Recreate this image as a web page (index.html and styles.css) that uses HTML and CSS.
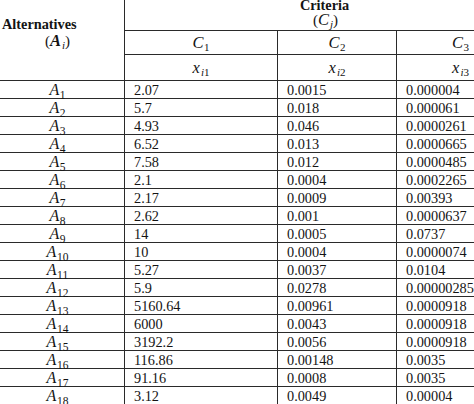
FILE: index.html
```html
<!DOCTYPE html>
<html>
<head>
<meta charset="utf-8">
<link rel="stylesheet" href="styles.css">
</head>
<body>
<div class="tbl">
  <div class="cell alt-head">
    <div class="alt-title">Alternatives</div>
    <div class="alt-sym">(<span class="m b">A</span><sub class="ms">i</sub>)</div>
  </div>
  <div class="cell crit-head">
    <div class="crit-title">Criteria</div>
    <div class="crit-sym">(<span class="m">C</span><sub class="ms">j</sub>)</div>
  </div>
  <div class="cell hc"><span class="m">C</span><sub class="ns">1</sub></div>
  <div class="cell hc"><span class="m">C</span><sub class="ns">2</sub></div>
  <div class="cell hc last"><span class="m">C</span><sub class="ns">3</sub></div>
  <div class="cell hx"><span class="m">x</span><sub class="ms">i</sub><sub class="ns n2">1</sub></div>
  <div class="cell hx"><span class="m">x</span><sub class="ms">i</sub><sub class="ns n2">2</sub></div>
  <div class="cell hx last"><span class="m">x</span><sub class="ms">i</sub><sub class="ns n2">3</sub></div>

  <div class="cell lab"><span class="m">A</span><sub class="ns">1</sub></div><div class="cell v">2.07</div><div class="cell v">0.0015</div><div class="cell v last">0.000004</div>
  <div class="cell lab"><span class="m">A</span><sub class="ns">2</sub></div><div class="cell v">5.7</div><div class="cell v">0.018</div><div class="cell v last">0.000061</div>
  <div class="cell lab"><span class="m">A</span><sub class="ns">3</sub></div><div class="cell v">4.93</div><div class="cell v">0.046</div><div class="cell v last">0.0000261</div>
  <div class="cell lab"><span class="m">A</span><sub class="ns">4</sub></div><div class="cell v">6.52</div><div class="cell v">0.013</div><div class="cell v last">0.0000665</div>
  <div class="cell lab"><span class="m">A</span><sub class="ns">5</sub></div><div class="cell v">7.58</div><div class="cell v">0.012</div><div class="cell v last">0.0000485</div>
  <div class="cell lab"><span class="m">A</span><sub class="ns">6</sub></div><div class="cell v">2.1</div><div class="cell v">0.0004</div><div class="cell v last">0.0002265</div>
  <div class="cell lab"><span class="m">A</span><sub class="ns">7</sub></div><div class="cell v">2.17</div><div class="cell v">0.0009</div><div class="cell v last">0.00393</div>
  <div class="cell lab"><span class="m">A</span><sub class="ns">8</sub></div><div class="cell v">2.62</div><div class="cell v">0.001</div><div class="cell v last">0.0000637</div>
  <div class="cell lab"><span class="m">A</span><sub class="ns">9</sub></div><div class="cell v">14</div><div class="cell v">0.0005</div><div class="cell v last">0.0737</div>
  <div class="cell lab"><span class="m">A</span><sub class="ns">10</sub></div><div class="cell v">10</div><div class="cell v">0.0004</div><div class="cell v last">0.0000074</div>
  <div class="cell lab"><span class="m">A</span><sub class="ns">11</sub></div><div class="cell v">5.27</div><div class="cell v">0.0037</div><div class="cell v last">0.0104</div>
  <div class="cell lab"><span class="m">A</span><sub class="ns">12</sub></div><div class="cell v">5.9</div><div class="cell v">0.0278</div><div class="cell v last">0.00000285</div>
  <div class="cell lab"><span class="m">A</span><sub class="ns">13</sub></div><div class="cell v">5160.64</div><div class="cell v">0.00961</div><div class="cell v last">0.0000918</div>
  <div class="cell lab"><span class="m">A</span><sub class="ns">14</sub></div><div class="cell v">6000</div><div class="cell v">0.0043</div><div class="cell v last">0.0000918</div>
  <div class="cell lab"><span class="m">A</span><sub class="ns">15</sub></div><div class="cell v">3192.2</div><div class="cell v">0.0056</div><div class="cell v last">0.0000918</div>
  <div class="cell lab"><span class="m">A</span><sub class="ns">16</sub></div><div class="cell v">116.86</div><div class="cell v">0.00148</div><div class="cell v last">0.0035</div>
  <div class="cell lab"><span class="m">A</span><sub class="ns">17</sub></div><div class="cell v">91.16</div><div class="cell v">0.0008</div><div class="cell v last">0.0035</div>
  <div class="cell lab"><span class="m">A</span><sub class="ns">18</sub></div><div class="cell v">3.12</div><div class="cell v">0.0049</div><div class="cell v last">0.00004</div>
</div>
</body>
</html>
```

FILE: styles.css
```css
html, body {
  margin: 0;
  padding: 0;
  background: #ffffff;
  overflow: hidden;
  width: 474px;
  height: 404px;
}

.tbl {
  display: grid;
  grid-template-columns: 125px 153px 119px 127px;
  grid-template-rows: 31px 24px 26px repeat(18, 18px);
  width: 524px;
  font-family: "Liberation Serif", "Times New Roman", serif;
  font-size: 14.3px;
  color: #141414;
}

.cell {
  box-sizing: border-box;
  border-right: 1.3px solid #2a2a2a;
  border-bottom: 1.3px solid #2a2a2a;
  white-space: nowrap;
}

.cell.last {
  border-right: none;
}

.alt-head {
  grid-row: 1 / span 3;
  grid-column: 1;
  font-weight: bold;
  padding-top: 17px;
}

.alt-title {
  padding-left: 2px;
  line-height: 15px;
}

.alt-sym {
  text-align: center;
  padding-right: 9px;
  line-height: 17px;
  font-weight: normal;
  font-size: 15px;
}

.crit-head {
  grid-row: 1;
  grid-column: 2 / span 3;
  border-right: none;
  text-align: center;
  font-weight: bold;
}

.crit-title {
  line-height: 13px;
  margin-top: -1px;
}

.crit-sym {
  font-weight: normal;
  line-height: 16px;
  font-size: 15px;
  padding-left: 2px;
}

.hc, .hx {
  text-align: center;
  font-size: 15px;
}

.hc {
  line-height: 22px;
  padding-top: 1px;
}

.hx {
  line-height: 24px;
  padding-top: 1px;
}

.m {
  font-style: italic;
  font-family: "Liberation Serif", "DejaVu Serif", serif;
  font-size: 16.5px;
}

.m.b {
  font-weight: bold;
}

sub {
  font-size: 11px;
  vertical-align: -3px;
  line-height: 0;
}

.ms {
  font-style: italic;
  margin-left: 1px;
}

.ns {
  font-style: normal;
  margin-left: 0.5px;
}

.n2 {
  margin-left: 0;
}

.lab {
  text-align: center;
  padding-right: 9px;
  line-height: 17px;
  padding-top: 0;
}

.lab .m {
  font-size: 16px;
}

.lab sub {
  font-size: 11.5px;
  vertical-align: -3.5px;
}

.v {
  padding-left: 9px;
  line-height: 17px;
  padding-top: 1px;
}
```
